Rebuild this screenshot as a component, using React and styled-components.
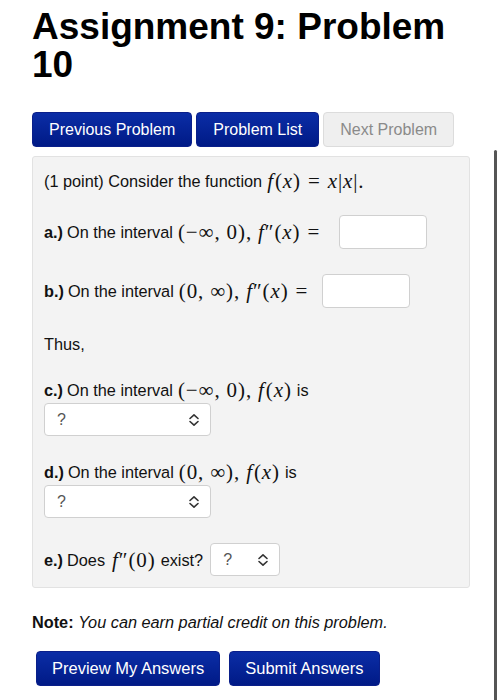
import React from 'react'
import styled, { createGlobalStyle } from 'styled-components'

const GlobalStyle = createGlobalStyle`
  html, body {
    margin: 0;
    padding: 0;
    background: #fff;
  }
  body {
    font-family: "Liberation Sans", Arial, sans-serif;
    color: #111;
  }
`

const Page = styled.div`
  position: relative;
  padding: 0 32px 20px 32px;
  width: 503px;
  box-sizing: border-box;
`

const ScrollIndicator = styled.div`
  position: absolute;
  left: 494px;
  top: 150px;
  width: 3px;
  height: 560px;
  background: #555;
  border-radius: 2px;
`

const Title = styled.h1`
  margin: 0;
  padding-top: 8px;
  font-size: 37px;
  line-height: 38px;
  font-weight: 700;
  color: #000;
`

const NavRow = styled.div`
  display: flex;
  gap: 4px;
  margin-top: 28px;
`

const Button = styled.button`
  font-family: "Liberation Sans", Arial, sans-serif;
  font-size: ${p => p.$size || 16}px;
  height: 35px;
  padding: 0 ${p => p.$pad || 15}px;
  border-radius: 4px;
  cursor: pointer;
  border: 1px solid ${p => (p.$disabled ? '#dcdcdc' : '#0a1f8a')};
  color: ${p => (p.$disabled ? '#8a8a8a' : '#fff')};
  background: ${p =>
    p.$disabled ? '#efefef' : 'linear-gradient(#0b2da6, #001a86)'};
`

const Panel = styled.div`
  margin-top: 9px;
  width: 438px;
  box-sizing: border-box;
  background: #f3f3f3;
  border: 1px solid #e2e2e2;
  border-radius: 3px;
  padding: 13px 11px 11px 11px;
  display: flex;
  flex-direction: column;
  font-size: 16.3px;
`

const Line = styled.div`
  display: flex;
  align-items: center;
  height: ${p => p.$h || 22}px;
  line-height: 22px;
  margin-top: ${p => p.$top || 0}px;
  white-space: nowrap;
`

const Label = styled.b`
  font-weight: 700;
  margin-right: 4px;
`

const Math = styled.span`
  font-family: "Liberation Serif", "Times New Roman", serif;
  font-size: 21px;
  line-height: 22px;
  letter-spacing: 0.9px;
  margin: 0 ${p => p.$gap ?? 5}px 0 ${p => p.$lgap ?? 5}px;
  white-space: nowrap;
`

const I = styled.i`
  font-style: italic;
  margin-right: ${p => p.$r || 0}px;
`

const Rel = styled.span`
  margin: 0 7px;
`

const Punct = styled.span`
  margin-right: 6px;
`

const AnswerBox = styled.div`
  width: 88px;
  height: 34px;
  box-sizing: border-box;
  background: #fff;
  border: 1px solid #d0d0d0;
  border-radius: 4px;
  margin-left: 6px;
`

const Select = styled.div`
  display: flex;
  align-items: center;
  justify-content: space-between;
  width: ${p => p.$w}px;
  height: 33px;
  box-sizing: border-box;
  background: #fff;
  border: 1px solid #d0d0d0;
  border-radius: 4px;
  padding: 0 10px 0 12px;
  margin-top: ${p => p.$top || 0}px;
  margin-left: ${p => p.$left || 0}px;
  color: #555;
  font-size: 16px;
`

const Note = styled.p`
  margin: 23px 0 0 0;
  font-size: 16.3px;
  line-height: 22px;
`

const ActionRow = styled.div`
  display: flex;
  gap: 9px;
  margin-top: 18px;
  padding-left: 4px;
`

const Chevron = () => (
  <svg width="12" height="14" viewBox="0 0 12 14">
    <path d="M2 5.5 L6 1.8 L10 5.5" fill="none" stroke="#333" strokeWidth="1.6" strokeLinecap="round" strokeLinejoin="round" />
    <path d="M2 8.5 L6 12.2 L10 8.5" fill="none" stroke="#333" strokeWidth="1.6" strokeLinecap="round" strokeLinejoin="round" />
  </svg>
)

const Dropdown = ({ w, top, left }) => (
  <Select $w={w} $top={top} $left={left}>
    <span>?</span>
    <Chevron />
  </Select>
)

const Fx = ({ d }) => (
  <>
    <I $r={d ? 0 : 1}>f</I>
    {d && '″'}(<I>x</I>)
  </>
)

export default function App() {
  return (
    <>
      <GlobalStyle />
      <Page>
        <ScrollIndicator />
        <Title>
          Assignment 9: Problem
          <br />
          10
        </Title>

        <NavRow>
          <Button $pad={16}>Previous Problem</Button>
          <Button $pad={16}>Problem List</Button>
          <Button $pad={16} $disabled>Next Problem</Button>
        </NavRow>

        <Panel>
          <Line>
            (1 point) Consider the function
            <Math $gap={0}>
              <Fx />
              <Rel>=</Rel>
              <I>x</I>|<I>x</I>|.
            </Math>
          </Line>

          <Line $top={23} $h={34}>
            <Label>a.)</Label>On the interval
            <Math $gap={6}>
              (−∞<Punct>,</Punct>0)<Punct>,</Punct>
              <Fx d />
              <Rel>=</Rel>
            </Math>
            <AnswerBox />
          </Line>

          <Line $top={25} $h={34}>
            <Label>b.)</Label>On the interval
            <Math $gap={1}>
              (0<Punct>,</Punct>∞)<Punct>,</Punct>
              <Fx d />
              <Rel>=</Rel>
            </Math>
            <AnswerBox />
          </Line>

          <Line $top={25}>Thus,</Line>

          <Line $top={24}>
            <Label>c.)</Label>On the interval
            <Math>
              (−∞<Punct>,</Punct>0)<Punct>,</Punct>
              <Fx />
            </Math>
            is
          </Line>
          <Dropdown w={167} top={2} />

          <Line $top={25}>
            <Label>d.)</Label>On the interval
            <Math>
              (0<Punct>,</Punct>∞)<Punct>,</Punct>
              <Fx />
            </Math>
            is
          </Line>
          <Dropdown w={167} top={2} />

          <Line $top={25} $h={33}>
            <Label>e.)</Label>Does
            <Math $lgap={7}>
              <I>f</I>″(0)
            </Math>
            exist?
            <Dropdown w={70} left={7} />
          </Line>
        </Panel>

        <Note>
          <b>Note:</b> <i>You can earn partial credit on this problem.</i>
        </Note>

        <ActionRow>
          <Button $pad={15} $size={16.5}>Preview My Answers</Button>
          <Button $pad={15} $size={16.5}>Submit Answers</Button>
        </ActionRow>
      </Page>
    </>
  )
}
